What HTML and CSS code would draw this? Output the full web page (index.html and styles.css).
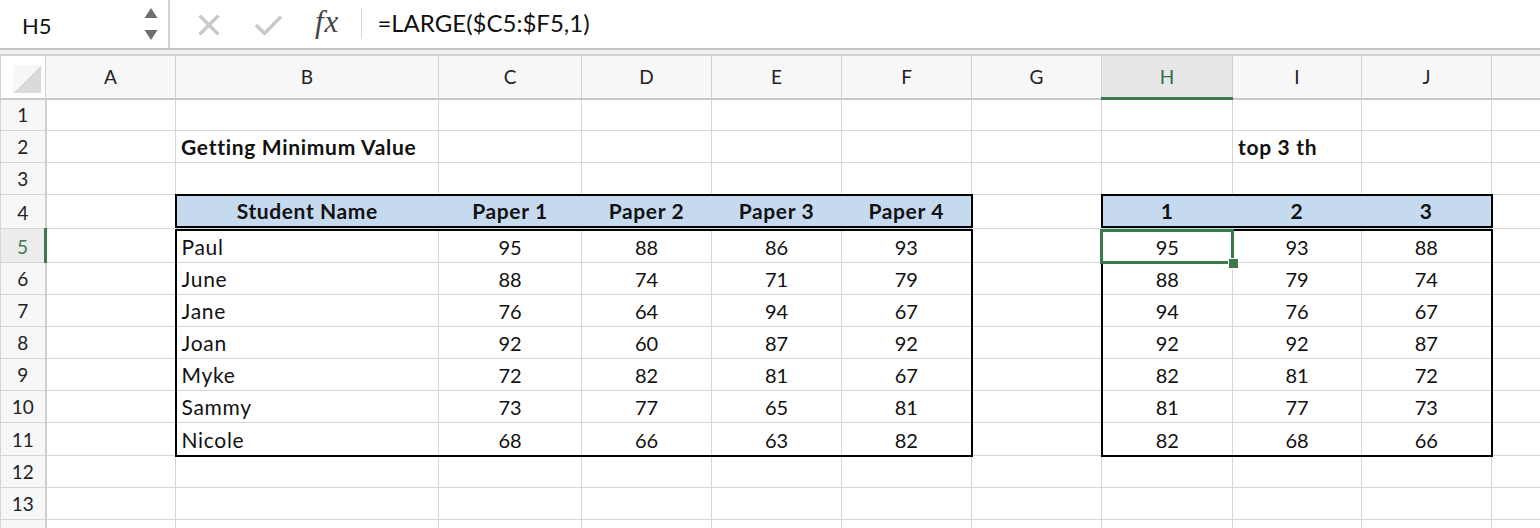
FILE: index.html
```html
<!DOCTYPE html>
<html lang="en">
<head>
    <meta charset="UTF-8">
    <title>LARGE - top 3</title>
    <link rel="stylesheet" href="styles.css">
</head>
<body>
    <div class="toolbar">
        <div class="namebox">
            <span class="ref">H5</span>
            <svg class="spin" width="14" height="32" viewBox="0 0 14 32">
                <path d="M7 0 L13.5 10 L0.5 10 Z" fill="#6e6e6e"/>
                <path d="M0.5 22 L13.5 22 L7 32 Z" fill="#6e6e6e"/>
            </svg>
        </div>
        <svg class="icon-x" width="22" height="20" viewBox="0 0 22 20">
            <path d="M1.5 0.5 L20.5 19.5 M20.5 0.5 L1.5 19.5" stroke="#c9c9c9" stroke-width="3.4"/>
        </svg>
        <svg class="icon-check" width="27" height="20" viewBox="0 0 27 20">
            <path d="M1 10 L9.5 18.5 L26 1.5" stroke="#c9c9c9" stroke-width="3.4" fill="none"/>
        </svg>
        <span class="fx">fx</span>
        <span class="sep"></span>
        <div class="formula">=LARGE($C5:$F5,1)</div>
    </div>
    <div class="divider"></div>

    <div class="grid">
        <table class="sheet">
            <colgroup>
                <col class="c-hdr"><col class="c-a"><col class="c-b"><col class="c-c">
                <col class="c-std"><col class="c-std"><col class="c-std"><col class="c-std">
                <col class="c-h"><col class="c-i"><col class="c-std"><col class="c-std">
            </colgroup>
            <thead>
                <tr>
                    <th class="corner"></th>
                    <th>A</th><th>B</th><th>C</th><th>D</th><th>E</th><th>F</th>
                    <th>G</th><th class="on">H</th><th>I</th><th>J</th><th></th>
                </tr>
            </thead>
            <tbody id="rows"></tbody>
        </table>
    </div>

    <script>
        const scores = [
            ['Paul', 95, 88, 86, 93],
            ['June', 88, 74, 71, 79],
            ['Jane', 76, 64, 94, 67],
            ['Joan', 92, 60, 87, 92],
            ['Myke', 72, 82, 81, 67],
            ['Sammy', 73, 77, 65, 81],
            ['Nicole', 68, 66, 63, 82]
        ];

        const tbody = document.getElementById('rows');
        const empty = n => '<td></td>'.repeat(n);

        for (let r = 1; r <= 14; r++) {
            let cells = '';
            if (r === 2) {
                cells = `<td></td><td class="bold">Getting Minimum Value</td>${empty(6)}<td class="bold">top 3 th</td>${empty(2)}`;
            } else if (r === 4) {
                cells = `<td></td>
                    <td class="head first">Student Name</td>
                    <td class="head">Paper 1</td><td class="head">Paper 2</td>
                    <td class="head">Paper 3</td><td class="head last">Paper 4</td>
                    <td></td>
                    <td class="head first">1</td><td class="head">2</td><td class="head last">3</td>
                    <td></td>`;
            } else if (r >= 5 && r <= 11) {
                const row = scores[r - 5];
                // LARGE(k) for k = 1..3 over the four papers
                const top = row.slice(1).sort((a, b) => b - a).slice(0, 3);
                const edge = r === 11 ? ' end' : '';
                cells = `<td></td><td class="name first${edge}">${row[0]}</td>`;
                row.slice(1).forEach((v, i) => {
                    cells += `<td class="num${edge}${i === 3 ? ' last' : ''}">${v}</td>`;
                });
                cells += '<td></td>';
                top.forEach((v, i) => {
                    let cls = 'num' + edge;
                    if (i === 0) cls += ' first';
                    if (i === 2) cls += ' last';
                    if (r === 5 && i === 0) cls += ' sel';
                    cells += `<td class="${cls}">${v}</td>`;
                });
                cells += '<td></td>';
            } else {
                cells = empty(11);
            }
            const active = r === 5 ? ' class="on"' : '';
            const label = r < 14 ? r : '';
            tbody.innerHTML += `<tr class="r${r}"><th${active}>${label}</th>${cells}</tr>`;
        }
    </script>
</body>
</html>
```

FILE: styles.css
```css
body {
    margin: 0;
    font-family: Lato, "Open Sans", sans-serif;
    color: #111;
    background-color: #fff;
    overflow: hidden;
}
.toolbar {
    display: flex;
    align-items: flex-start;
    height: 48px;
    border-bottom: 2px solid #c4c4c4;
}
.namebox {
    display: flex;
    align-items: flex-start;
    justify-content: space-between;
    width: 170px;
    height: 100%;
    padding: 0 10px 0 22px;
    box-sizing: border-box;
    border-right: 2px solid #d2d2d2;
}
.ref {
    font-size: 22px;
    line-height: 30px;
    padding-top: 11px;
}
.spin {
    margin-top: 8px;
}
.icon-x {
    margin: 15px 0 0 28px;
}
.icon-check {
    margin: 15px 0 0 35px;
}
.fx {
    font-family: "Liberation Serif", serif;
    font-style: italic;
    font-size: 31px;
    line-height: 36px;
    letter-spacing: 1px;
    color: #444;
    margin-left: 33px;
    padding-top: 4px;
}
.sep {
    width: 1px;
    height: 31px;
    background-color: #d6d6d6;
    margin: 8px 0 0 22px;
}
.formula {
    font-size: 24px;
    line-height: 30px;
    padding-top: 8px;
    margin-left: 15px;
}
.divider {
    height: 4px;
    border-bottom: 1px solid #cfcfcf;
    background-color: #efefef;
}
.grid {
    width: 1540px;
    overflow: hidden;
}
.sheet {
    border-collapse: collapse;
    table-layout: fixed;
    width: 1621px;
}
.c-hdr { width: 45px; }
.c-a { width: 130px; }
.c-b { width: 263px; }
.c-c { width: 143px; }
.c-std { width: 130px; }
.c-h { width: 131px; }
.c-i { width: 129px; }
th, td {
    border: 1px solid #d6d6d6;
    padding: 0 0 3px;
    font-size: 20px;
    line-height: 24px;
    white-space: nowrap;
    overflow: visible;
    vertical-align: bottom;
}
thead th {
    height: 41px;
    font-weight: normal;
    font-size: 19px;
    color: #222;
    vertical-align: middle;
    padding: 0;
    background-color: #f7f7f7;
    border-color: #d2d2d2;
    border-bottom: 2px solid #c9c9c9;
}
thead th.on {
    background-color: #e7e7e7;
    color: #2f6f43;
    border-bottom: 3px solid #3b7a4c;
}
.corner {
    background: linear-gradient(135deg, #f7f7f7 50%, #dadada 50%);
    background-size: 28px 28px;
    background-position: 12px 9px;
    background-repeat: no-repeat;
}
tbody th {
    font-weight: normal;
    font-size: 19px;
    color: #222;
    text-align: center;
    background-color: #f7f7f7;
    border-right: 2px solid #cfcfcf;
}
tbody th.on {
    background-color: #ececec;
    color: #3b7a4c;
    border-right: 3px solid #3b7a4c;
}
tr { height: 32px; }
.r4, .r5 { height: 34px; }
.r11 { height: 33px; }
.bold {
    font-weight: bold;
    font-size: 21px;
    letter-spacing: 0.7px;
    padding-left: 5px;
}
.head {
    font-weight: bold;
    font-size: 21px;
    letter-spacing: 0.6px;
    text-align: center;
    background-color: #c5d9ef;
    border-top: 2px solid #000;
    border-left-color: #c5d9ef;
    border-right-color: #c5d9ef;
    border-bottom: 5px double #000;
}
.name {
    font-size: 21px;
    letter-spacing: 0.7px;
    padding-left: 5px;
}
.num {
    text-align: center;
}
.first { border-left: 2px solid #000 !important; }
.last { border-right: 2px solid #000 !important; }
.end { border-bottom: 2px solid #000; }
.sel {
    position: relative;
}
.sel::before {
    content: "";
    position: absolute;
    left: -3px;
    top: -2px;
    right: -2px;
    bottom: -2px;
    border: 3px solid #3a794c;
}
.sel::after {
    content: "";
    position: absolute;
    right: -7px;
    bottom: -7px;
    width: 9px;
    height: 9px;
    background-color: #3a794c;
    border: 1px solid #fff;
}
```
